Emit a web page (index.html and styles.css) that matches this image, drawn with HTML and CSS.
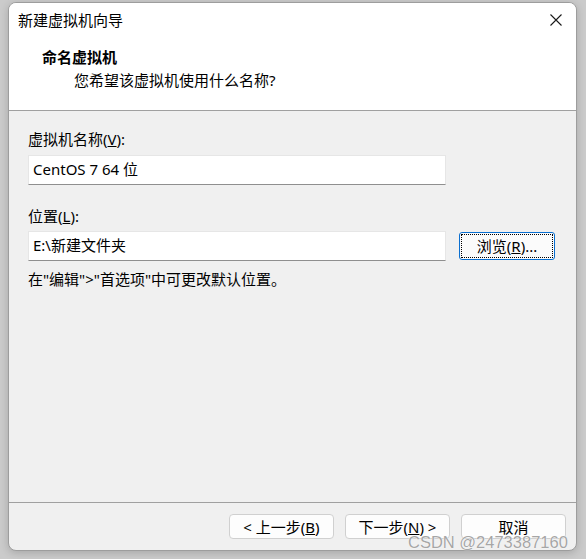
FILE: index.html
```html
<!DOCTYPE html>
<html lang="zh">
<head>
<meta charset="utf-8">
<title>新建虚拟机向导</title>
<link rel="stylesheet" href="styles.css">
</head>
<body>
<div class="window">
  <div class="header">
    <div class="titlebar">
      <span class="title">新建虚拟机向导</span>
      <svg class="close" width="12" height="12" viewBox="0 0 12 12"><path d="M0.5 0.5 L11.5 11.5 M11.5 0.5 L0.5 11.5" stroke="#1a1a1a" stroke-width="1.1" fill="none"/></svg>
    </div>
    <div class="heading">命名虚拟机</div>
    <div class="subheading">您希望该虚拟机使用什么名称?</div>
  </div>
  <div class="content">
    <div class="label first">虚拟机名称(<u>V</u>):</div>
    <div class="input">CentOS 7 64 位</div>
    <div class="label second">位置(<u>L</u>):</div>
    <div class="row">
      <div class="input">E:\新建文件夹</div>
      <div class="browse"><span class="focus">浏览(<u>R</u>)...</span></div>
    </div>
    <div class="note">在"编辑"&gt;"首选项"中可更改默认位置。</div>
  </div>
  <div class="footer">
    <div class="btn">&lt; 上一步(<u>B</u>)</div>
    <div class="btn">下一步(<u>N</u>) &gt;</div>
    <div class="btn">取消</div>
  </div>
</div>
<div class="watermark">CSDN @2473387160</div>
</body>
</html>
```
FILE: styles.css
```css
html, body {
  margin: 0;
  padding: 0;
}
body {
  width: 586px;
  height: 559px;
  background: #cbcbcb;
  font-family: "Noto Sans", "Noto Sans CJK SC", sans-serif;
  font-size: 15px;
  color: #000;
  padding: 2px 0 0 8px;
  box-sizing: border-box;
  position: relative;
  overflow: hidden;
}
.window {
  width: 569px;
  height: 549px;
  box-sizing: border-box;
  border: 1px solid #9d9d9d;
  border-radius: 8px;
  background: #f0f0f0;
  display: flex;
  flex-direction: column;
  overflow: hidden;
  box-shadow: 0 2px 8px rgba(0,0,0,0.18);
}
.header {
  background: #fff;
  height: 108px;
  box-sizing: border-box;
  border-bottom: 1px solid #a0a0a0;
  flex: none;
}
.titlebar {
  height: 34px;
  display: flex;
  align-items: center;
  justify-content: space-between;
  padding: 0 14px 0 9px;
}
.title {
  font-size: 15px;
  line-height: 34px;
}
.close {
  display: block;
}
.heading {
  font-weight: bold;
  font-size: 15px;
  line-height: 20px;
  margin: 10px 0 0 33px;
}
.subheading {
  line-height: 20px;
  margin: 3px 0 0 65px;
}
.content {
  flex: 1;
  padding: 18px 0 0 19px;
}
.label {
  line-height: 20px;
  height: 20px;
}
.label.first {
  margin-bottom: 6px;
}
.label.second {
  margin-top: 21px;
  margin-bottom: 5px;
}
.input {
  width: 418px;
  height: 30px;
  box-sizing: border-box;
  background: #fff;
  border: 1px solid #e6e6e6;
  border-bottom: 1px solid #8f8f8f;
  padding-left: 4px;
  line-height: 26px;
  font-size: 15px;
}
.row {
  display: flex;
  align-items: center;
  gap: 13px;
}
.browse {
  width: 96px;
  height: 28px;
  box-sizing: border-box;
  border: 1px solid #0a6fd0;
  border-radius: 3px;
  background: #fbfbfb;
  padding: 1px;
  display: flex;
}
.focus {
  flex: 1;
  border: 1px dotted #000;
  display: flex;
  align-items: center;
  justify-content: center;
  line-height: 20px;
}
.note {
  margin-top: 8px;
  line-height: 20px;
}
.footer {
  flex: none;
  height: 48px;
  box-sizing: border-box;
  border-top: 1px solid #a0a0a0;
  display: flex;
  justify-content: flex-end;
  gap: 11px;
  padding: 11px 10px 0 0;
}
.btn {
  width: 105px;
  height: 25px;
  box-sizing: border-box;
  border: 1px solid #d0d0d0;
  border-radius: 4px;
  background: #fdfdfd;
  display: flex;
  align-items: center;
  justify-content: center;
  line-height: 20px;
}
.watermark {
  position: absolute;
  left: 408px;
  top: 533px;
  font-family: "Liberation Sans", Arial, sans-serif;
  font-size: 16.5px;
  color: #a6a6a6;
  text-shadow: 0 0 1px #fff, 0 0 1px #fff;
  white-space: nowrap;
}
```
